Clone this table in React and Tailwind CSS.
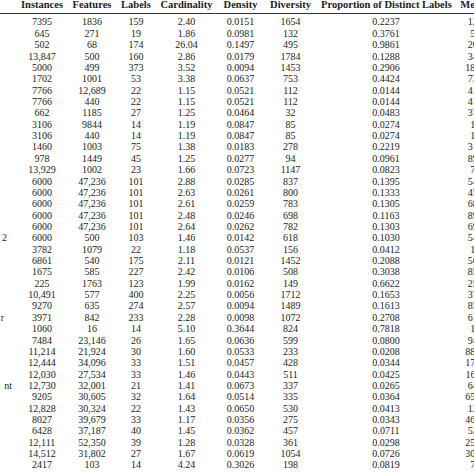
import React from 'react';

const cols = 'grid grid-cols-[20px_44px_56px_32px_69px_39px_61px_130px_56px]';

const headers = ['', 'Instances', 'Features', 'Labels', 'Cardinality', 'Density', 'Diversity', 'Proportion of Distinct Labels', 'MeanIR'];

// name, instances, features, labels, card, density, diversity, pdl, meanIR
const rows = [
  ['', '7395', '1836', '159', '2.40', '0.0151', '1654', '0.2237', '12.50'],
  ['', '645', '271', '19', '1.86', '0.0981', '132', '0.3761', '5.41'],
  ['', '502', '68', '174', '26.04', '0.1497', '495', '0.9861', '20.58'],
  ['', '13,847', '500', '160', '2.86', '0.0179', '1784', '0.1288', '34.16'],
  ['', '5000', '499', '373', '3.52', '0.0094', '1453', '0.2906', '189.57'],
  ['', '1702', '1001', '53', '3.38', '0.0637', '753', '0.4424', '73.95'],
  ['', '7766', '12,689', '22', '1.15', '0.0521', '112', '0.0144', '41.98'],
  ['', '7766', '440', '22', '1.15', '0.0521', '112', '0.0144', '41.98'],
  ['', '662', '1185', '27', '1.25', '0.0464', '32', '0.0483', '37.31'],
  ['', '3106', '9844', '14', '1.19', '0.0847', '85', '0.0274', '1.48'],
  ['', '3106', '440', '14', '1.19', '0.0847', '85', '0.0274', '1.48'],
  ['', '1460', '1003', '75', '1.38', '0.0183', '278', '0.2219', '31.15'],
  ['', '978', '1449', '45', '1.25', '0.0277', '94', '0.0961', '89.50'],
  ['', '13,929', '1002', '23', '1.66', '0.0723', '1147', '0.0823', '7.14'],
  ['', '6000', '47,236', '101', '2.88', '0.0285', '837', '0.1395', '54.49'],
  ['', '6000', '47,236', '101', '2.63', '0.0261', '800', '0.1333', '45.51'],
  ['', '6000', '47,236', '101', '2.61', '0.0259', '783', '0.1305', '68.33'],
  ['', '6000', '47,236', '101', '2.48', '0.0246', '698', '0.1163', '89.37'],
  ['', '6000', '47,236', '101', '2.64', '0.0262', '782', '0.1303', '69.68'],
  ['2', '6000', '500', '103', '1.46', '0.0142', '618', '0.1030', '54.99'],
  ['', '3782', '1079', '22', '1.18', '0.0537', '156', '0.0412', '1.80'],
  ['', '6861', '540', '175', '2.11', '0.0121', '1452', '0.2088', '56.78'],
  ['', '1675', '585', '227', '2.42', '0.0106', '508', '0.3038', '85.23'],
  ['', '225', '1763', '123', '1.99', '0.0162', '149', '0.6622', '25.13'],
  ['', '10,491', '577', '400', '2.25', '0.0056', '1712', '0.1653', '37.86'],
  ['', '9270', '635', '274', '2.57', '0.0094', '1489', '0.1613', '85.79'],
  ['r', '3971', '842', '233', '2.28', '0.0098', '1072', '0.2708', '61.26'],
  ['', '1060', '16', '14', '5.10', '0.3644', '824', '0.7818', '1.46'],
  ['', '7484', '23,146', '26', '1.65', '0.0636', '599', '0.0800', '94.74'],
  ['', '11,214', '21,924', '30', '1.60', '0.0533', '233', '0.0208', '880.18'],
  ['', '12,444', '34,096', '33', '1.51', '0.0457', '428', '0.0344', '176.70'],
  ['', '12,030', '27,534', '33', '1.46', '0.0443', '511', '0.0425', '168.11'],
  ['nt', '12,730', '32,001', '21', '1.41', '0.0673', '337', '0.0265', '64.42'],
  ['', '9205', '30,605', '32', '1.64', '0.0514', '335', '0.0364', '653.53'],
  ['', '12,828', '30,324', '22', '1.43', '0.0650', '530', '0.0413', '12.20'],
  ['', '8027', '39,679', '33', '1.17', '0.0356', '275', '0.0343', '461.86'],
  ['', '6428', '37,187', '40', '1.45', '0.0362', '457', '0.0711', '52.63'],
  ['', '12,111', '52,350', '39', '1.28', '0.0328', '361', '0.0298', '257.52'],
  ['', '14,512', '31,802', '27', '1.67', '0.0619', '1054', '0.0726', '302.39'],
  ['', '2417', '103', '14', '4.24', '0.3026', '198', '0.0819', '7.20'],
];

// cut-off dataset names: only their tails show at the left edge
const namePad = { '2': 'pr-[13px]', r: 'pr-[16px]', nt: 'pr-[8px]' };

function App() {
  return (
    <div className="w-[474px] h-[474px] overflow-hidden bg-white text-[#1c1c1c] font-['Liberation_Serif',serif]">
      <div className={`${cols} h-[14px] border-b border-[#333] text-[10.5px] leading-[9px] font-bold`}>
        {headers.map((h, i) => (
          <div key={i} className="text-center whitespace-nowrap">{h}</div>
        ))}
      </div>
      <div className="pt-[2.3px]">
        {rows.map((r, ri) => (
          <div key={ri} className={`${cols} h-[11.36px] items-center text-[10px] leading-[11px]`}>
            {r.map((v, ci) =>
              ci === 0 ? (
                <div key={ci} className={`text-right whitespace-nowrap ${namePad[v] || ''}`}>{v}</div>
              ) : (
                <div key={ci} className="text-center whitespace-nowrap">{v}</div>
              )
            )}
          </div>
        ))}
      </div>
    </div>
  );
}

export default App;
